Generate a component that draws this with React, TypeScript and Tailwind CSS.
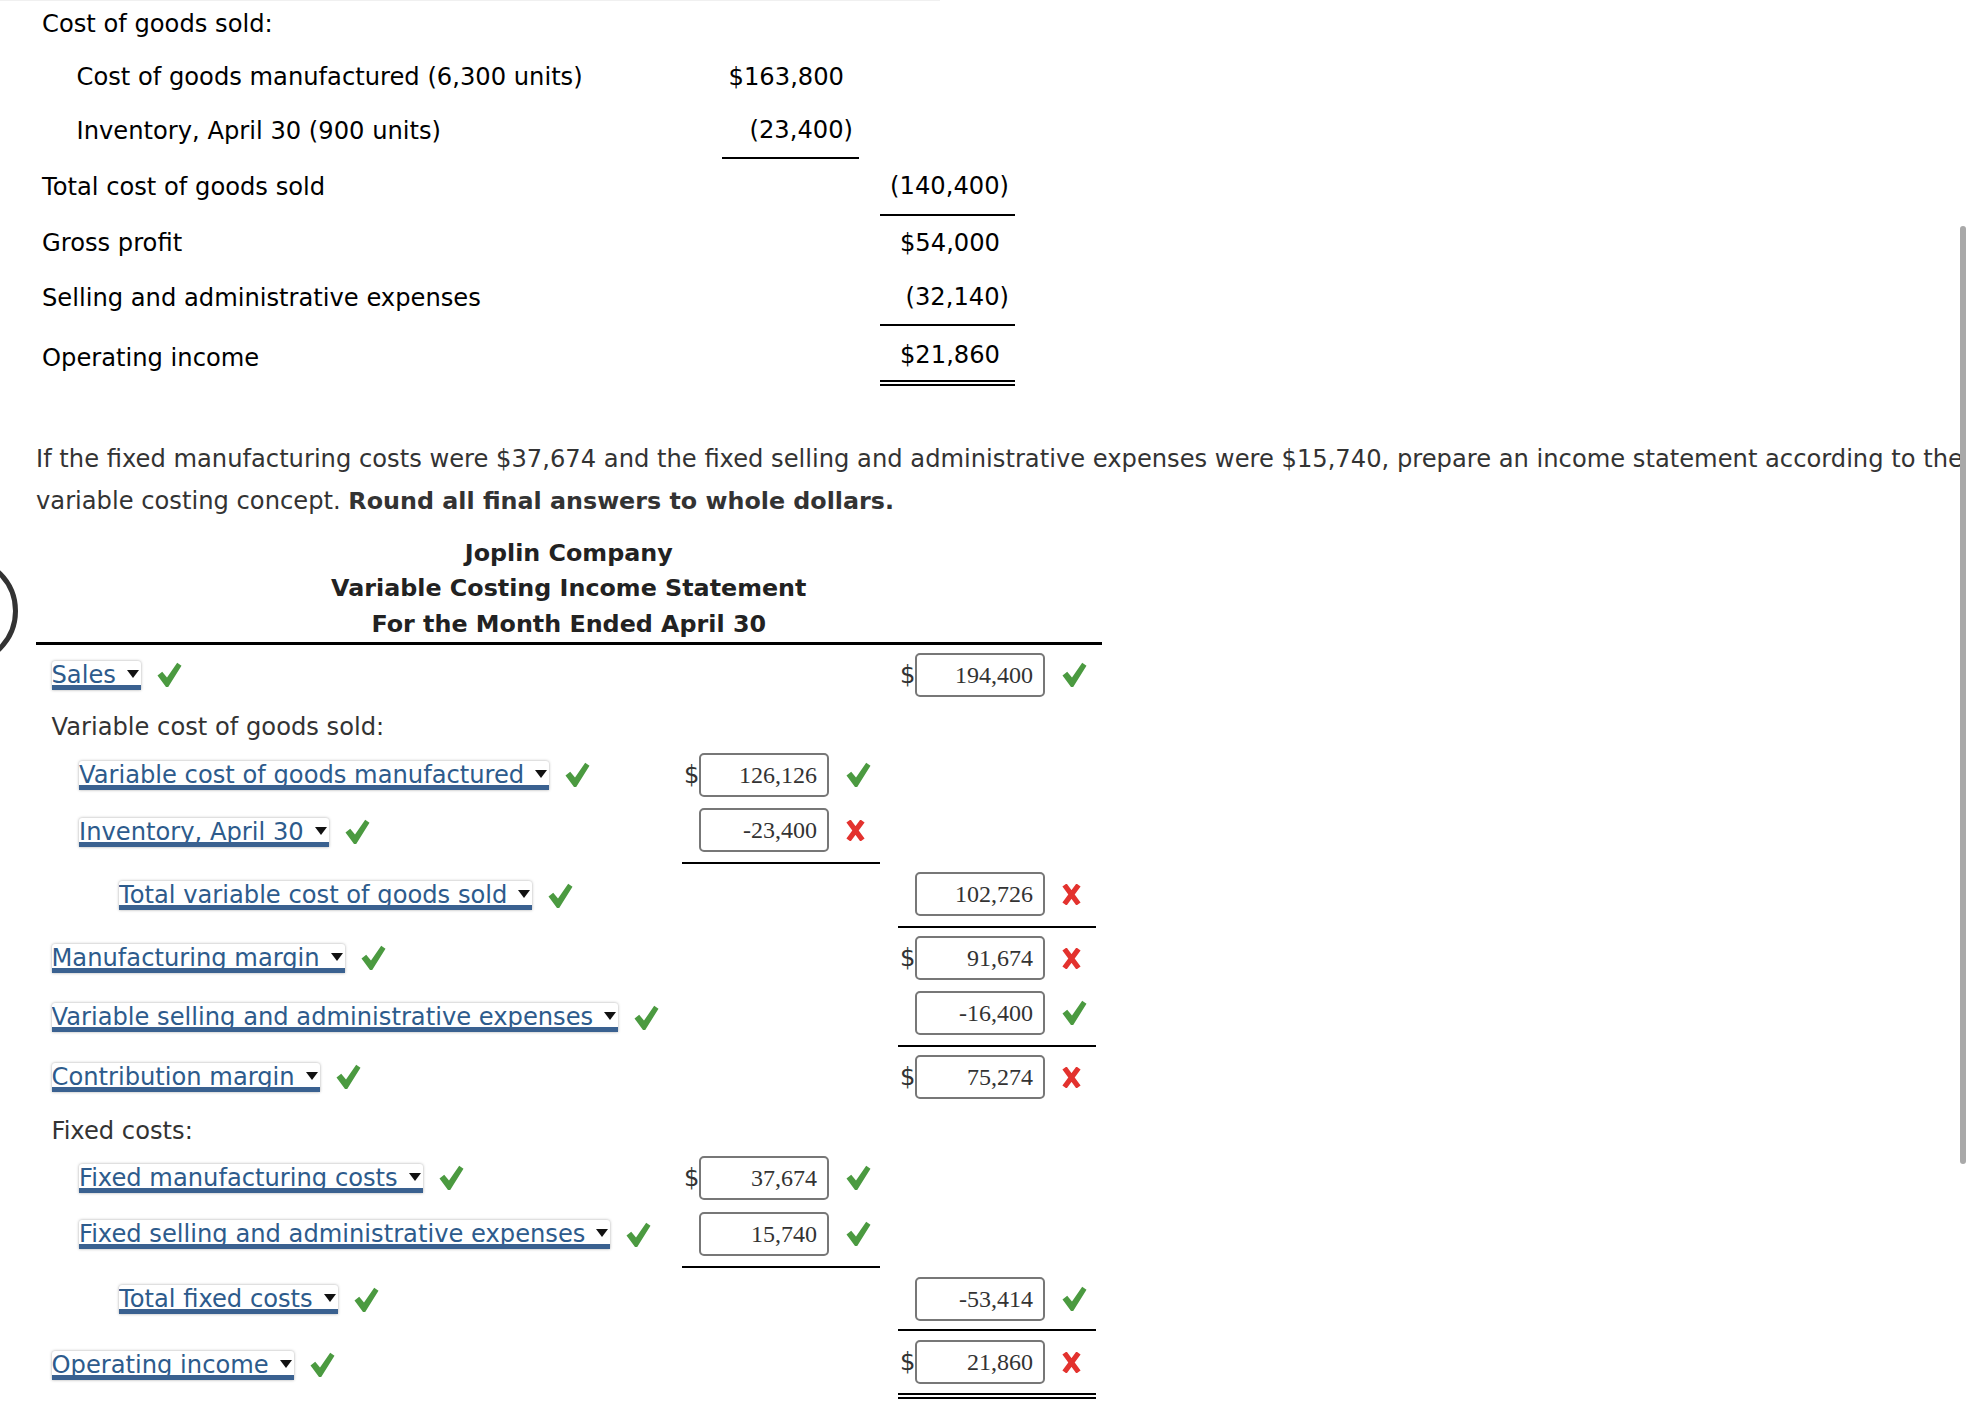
import React from "react";

function Check() {
  return (
    <svg width="25" height="26" viewBox="0 0 25 26" className="shrink-0">
      <path d="M0.5 13.5 L5.2 9.8 L10 15.6 L20.2 0.8 L24.5 3.8 L11.2 25 L9 25 Z" fill="#4b9a40" />
    </svg>
  );
}

function XMark() {
  return (
    <svg width="19" height="21" viewBox="0 0 19 21" className="shrink-0">
      <path d="M2.5 1 L16.5 20 M16.5 1 L2.5 20" stroke="#e3322e" strokeWidth="5.2" />
    </svg>
  );
}

function DD({ label }: { label: string }) {
  return (
    <span className="inline-flex h-[29px] shrink-0 items-start overflow-hidden rounded-t-[3px] border-b-[5px] border-[#3a6190] bg-white pr-[2px] shadow-[0_0_3px_rgba(0,0,0,0.35)]">
      <span className="whitespace-nowrap leading-[29px] text-[#2d5b8c]">{label}</span>
      <svg className="ml-[11px] mt-[9px] shrink-0" width="12" height="8" viewBox="0 0 12 8">
        <path d="M0 0 H12 L6 8 Z" fill="#111" />
      </svg>
    </span>
  );
}

type Val = {
  dollar?: boolean;
  value: string;
  ok: boolean;
  line?: "single" | "double";
  pb?: string;
};

function ValCell({ v }: { v?: Val }) {
  if (!v) return <div className="w-[198px] shrink-0" />;
  const lineCls =
    v.line === "single"
      ? "border-b-2 border-black"
      : v.line === "double"
      ? "border-b-[6px] border-double border-black"
      : "";
  return (
    <div className={`flex w-[198px] shrink-0 items-center ${lineCls} ${v.pb ?? ""}`}>
      <span className="w-[17px] pl-[2px] text-[#333]">{v.dollar ? "$" : ""}</span>
      <div className="flex h-[44px] w-[130px] items-center justify-end rounded-[5px] border-2 border-[#777] pr-[10px] font-['Liberation_Serif'] text-[24px] text-[#333]">
        {v.value}
      </div>
      <span className="ml-[17px] flex">{v.ok ? <Check /> : <XMark />}</span>
    </div>
  );
}

type Row = {
  h: string;
  indent: string;
  dd?: string;
  text?: string;
  c2?: Val;
  c3?: Val;
};

const rows: Row[] = [
  { h: "h-[60.4px]", indent: "pl-[15.5px]", dd: "Sales", c3: { dollar: true, value: "194,400", ok: true } },
  { h: "h-[44px]", indent: "pl-[15.5px]", text: "Variable cost of goods sold:" },
  { h: "h-[51.2px]", indent: "pl-[43px]", dd: "Variable cost of goods manufactured", c2: { dollar: true, value: "126,126", ok: true } },
  { h: "h-[62.9px]", indent: "pl-[43px]", dd: "Inventory, April 30", c2: { value: "-23,400", ok: false, line: "single", pb: "pb-[1.5px]" } },
  { h: "h-[64.5px]", indent: "pl-[83px]", dd: "Total variable cost of goods sold", c3: { value: "102,726", ok: false, line: "single", pb: "pb-[1.5px]" } },
  { h: "h-[60px]", indent: "pl-[15.5px]", dd: "Manufacturing margin", c3: { dollar: true, value: "91,674", ok: false } },
  { h: "h-[59px]", indent: "pl-[15.5px]", dd: "Variable selling and administrative expenses", c3: { value: "-16,400", ok: true, line: "single", pb: "pb-[7px]" } },
  { h: "h-[60px]", indent: "pl-[15.5px]", dd: "Contribution margin", c3: { dollar: true, value: "75,274", ok: false } },
  { h: "h-[48px]", indent: "pl-[15.5px]", text: "Fixed costs:" },
  { h: "h-[46px]", indent: "pl-[43px]", dd: "Fixed manufacturing costs", c2: { dollar: true, value: "37,674", ok: true } },
  { h: "h-[67px]", indent: "pl-[43px]", dd: "Fixed selling and administrative expenses", c2: { value: "15,740", ok: true, line: "single" } },
  { h: "h-[63.3px]", indent: "pl-[83px]", dd: "Total fixed costs", c3: { value: "-53,414", ok: true, line: "single" } },
  { h: "h-[67.7px]", indent: "pl-[15.5px]", dd: "Operating income", c3: { dollar: true, value: "21,860", ok: false, line: "double" } },
];

function TopRow({
  cls,
  label,
  indent,
  c2,
  c2cls,
  c3,
  c3cls,
}: {
  cls: string;
  label: string;
  indent?: boolean;
  c2?: string;
  c2cls?: string;
  c3?: string;
  c3cls?: string;
}) {
  return (
    <div className={`flex items-stretch ${cls}`}>
      <div className={`flex w-[680px] shrink-0 items-center whitespace-nowrap ${indent ? "pl-[34.5px]" : ""}`}>{label}</div>
      <div className={`flex w-[137px] shrink-0 items-center justify-end whitespace-nowrap ${c2cls ?? ""}`}>{c2}</div>
      <div className="w-[21px] shrink-0" />
      <div className={`flex w-[135px] shrink-0 items-center justify-end whitespace-nowrap ${c3cls ?? ""}`}>{c3}</div>
    </div>
  );
}

export default function App() {
  return (
    <div className="relative h-[1422px] w-[1967px] overflow-hidden bg-white font-['DejaVu_Sans',sans-serif] text-[24.2px]">
      {/* top table */}
      <div className="w-[940px] border-t border-[#f0f0f0] pl-[42px] text-black">
        <TopRow cls="h-[49.5px] pb-[4px]" label="Cost of goods sold:" />
        <TopRow cls="h-[54px]" indent label="Cost of goods manufactured (6,300 units)" c2="$163,800" c2cls="pr-[15px]" />
        <TopRow cls="h-[54px]" indent label="Inventory, April 30 (900 units)" c2="(23,400)" c2cls="pr-[6px] border-b-2 border-black" />
        <TopRow cls="h-[57px]" label="Total cost of goods sold" c3="(140,400)" c3cls="pr-[6px] border-b-2 border-black" />
        <TopRow cls="h-[55px]" label="Gross profit" c3="$54,000" c3cls="pr-[15px]" />
        <TopRow cls="h-[55.5px]" label="Selling and administrative expenses" c3="(32,140)" c3cls="pr-[6px] border-b-2 border-black" />
        <TopRow cls="h-[60px] pt-[4px]" label="Operating income" c3="$21,860" c3cls="pr-[15px] border-b-[6px] border-double border-black" />
      </div>

      {/* instructions */}
      <div className="mt-[53px] pl-[36px] leading-[41.6px] text-[#333]">
        <div className="whitespace-nowrap">
          If the fixed manufacturing costs were $37,674 and the fixed selling and administrative expenses were $15,740, prepare an income statement according to the
        </div>
        <div className="whitespace-nowrap">
          variable costing concept. <span className="text-[23.8px] font-bold">Round all final answers to whole dollars.</span>
        </div>
      </div>

      {/* statement */}
      <div className="ml-[36px] mt-[13px] w-[1065.5px] text-[#333]">
        <div className="pt-[1px] text-center text-[23.8px] font-bold leading-[35.3px] text-[#222]">
          <div>Joplin Company</div>
          <div>Variable Costing Income Statement</div>
          <div>For the Month Ended April 30</div>
        </div>
        <div className="border-t-[3px] border-black">
          {rows.map((r, i) => (
            <div key={i} className={`flex ${r.h}`}>
              <div className={`flex w-[646px] shrink-0 items-center ${r.indent}`}>
                {r.dd ? (
                  <>
                    <DD label={r.dd} />
                    <span className="ml-[16px] flex">
                      <Check />
                    </span>
                  </>
                ) : (
                  <span className="whitespace-nowrap">{r.text}</span>
                )}
              </div>
              <ValCell v={r.c2} />
              <div className="w-[18px] shrink-0" />
              <ValCell v={r.c3} />
            </div>
          ))}
        </div>
      </div>

      {/* partially visible circle at left edge */}
      <div className="absolute left-[-92px] top-[556px] h-[110px] w-[110px] rounded-full border-[5px] border-[#333]" />

      {/* scrollbar */}
      <div className="absolute left-[1960px] top-[226px] h-[938px] w-[6px] rounded-full bg-[#a9a9a9]" />
    </div>
  );
}
